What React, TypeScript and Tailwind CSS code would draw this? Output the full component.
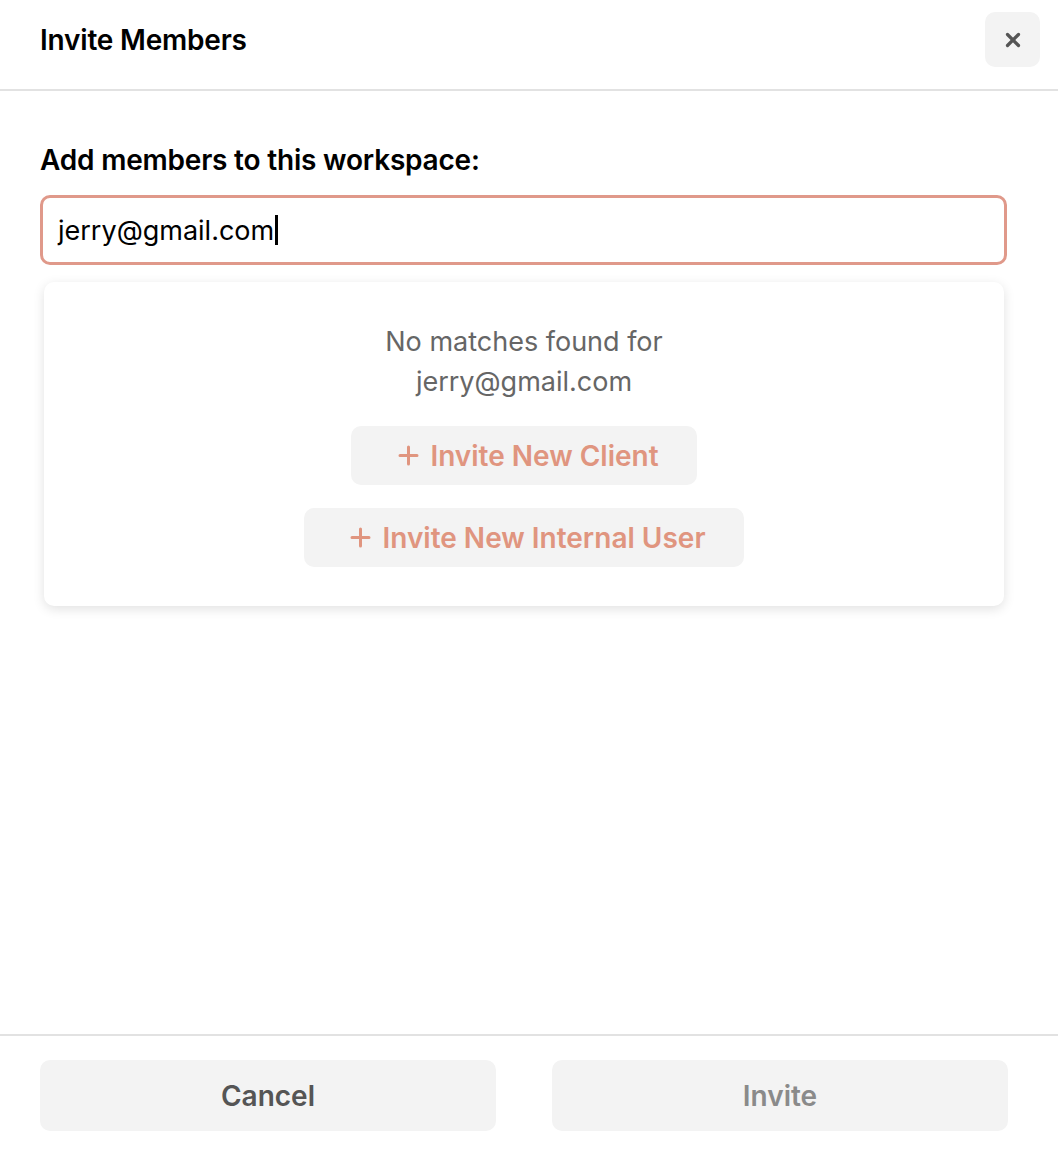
import { X } from 'lucide-react'

function PlusMark() {
  return (
    <svg width="21" height="21" viewBox="0 0 21 21" fill="none" stroke="currentColor" strokeWidth="3" strokeLinecap="round">
      <path d="M10.5 2v17M2 10.5h17" />
    </svg>
  )
}

export default function App() {
  const email = 'jerry@gmail.com'

  return (
    <div className="flex h-[1156px] w-full flex-col bg-white font-['Inter',sans-serif] text-black">
      {/* header */}
      <div className="flex h-[91px] shrink-0 items-start justify-between border-b-2 border-[#e2e2e2] pl-10 pr-[18px] pt-3">
        <h1 className="flex h-[55px] items-center text-[28px] font-semibold tracking-[-0.2px]">
          Invite Members
        </h1>
        <button className="flex h-[55px] w-[55px] items-center justify-center rounded-[10px] bg-[#f3f3f3] text-[#555]">
          <X size={22} strokeWidth={3.5} />
        </button>
      </div>

      {/* body */}
      <div className="flex-1 px-10 pt-[51px]">
        <label className="block text-[28px] font-semibold leading-[36px] tracking-[-0.2px]">
          Add members to this workspace:
        </label>
        <div className="mt-[17px] flex h-[70px] w-[967px] items-center rounded-[10px] border-[3px] border-[#e0998a] px-[15px]">
          <span className="text-[27px] leading-none">{email}</span>
          <span className="ml-[1px] h-[30px] w-[3px] bg-black" />
        </div>

        <div className="ml-1 mt-[17px] w-[960px] rounded-[10px] bg-white pb-[39px] pt-[40px] shadow-[0_3px_12px_rgba(0,0,0,0.12)]">
          <p className="text-center text-[27px] leading-[40px] text-[#666]">
            No matches found for
            <br />
            {email}
          </p>
          <div className="mt-[24px] flex flex-col items-center gap-[23px]">
            <button className="flex h-[59px] items-center gap-[11px] rounded-[10px] bg-[#f3f3f3] pl-[47px] pr-[38px] text-[28px] font-semibold text-[#e0957f]">
              <PlusMark />
              Invite New Client
            </button>
            <button className="flex h-[59px] items-center gap-[11px] rounded-[10px] bg-[#f3f3f3] pl-[46px] pr-[38px] text-[28px] font-semibold text-[#e0957f]">
              <PlusMark />
              Invite New Internal User
            </button>
          </div>
        </div>
      </div>

      {/* footer */}
      <div className="flex shrink-0 gap-[56px] border-t-2 border-[#e2e2e2] px-10 pb-[25px] pt-[24px]">
        <button className="h-[71px] w-[456px] rounded-[10px] bg-[#f3f3f3] text-[28px] font-semibold text-[#555]">
          Cancel
        </button>
        <button className="h-[71px] w-[456px] rounded-[10px] bg-[#f3f3f3] text-[28px] font-semibold text-[#8a8a8a]">
          Invite
        </button>
      </div>
    </div>
  )
}
